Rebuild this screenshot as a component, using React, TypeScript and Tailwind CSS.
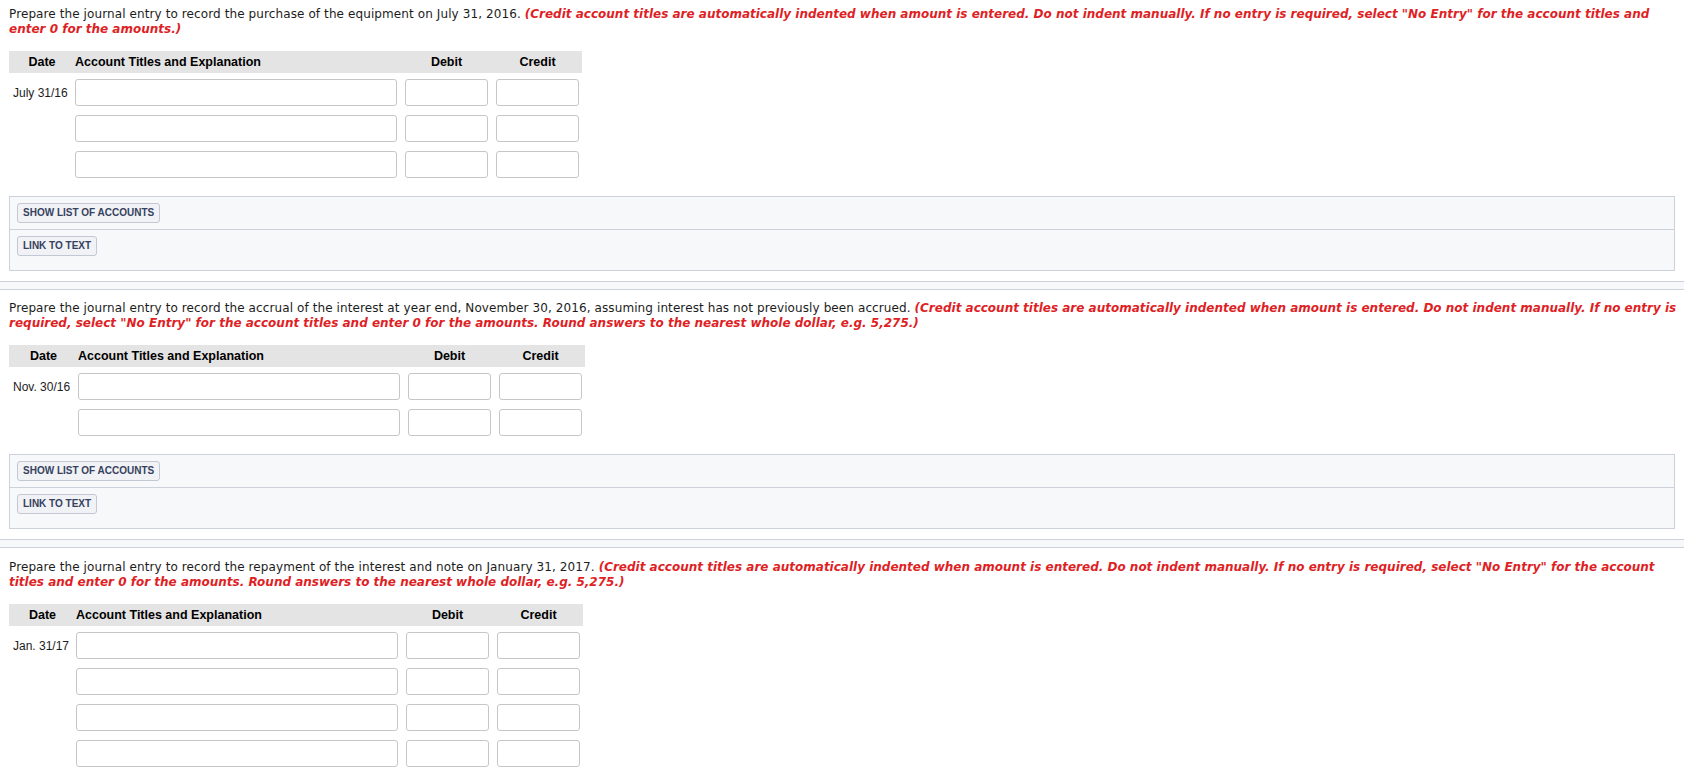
import React from 'react'

type Section = {
  lead: string
  redLine1: string
  redLine2: string
  date: string
  dateWidth: number
  rows: number
}

const sections: Section[] = [
  {
    lead: 'Prepare the journal entry to record the purchase of the equipment on July 31, 2016. ',
    redLine1:
      '(Credit account titles are automatically indented when amount is entered. Do not indent manually. If no entry is required, select "No Entry" for the account titles and',
    redLine2: 'enter 0 for the amounts.)',
    date: 'July 31/16',
    dateWidth: 66,
    rows: 3,
  },
  {
    lead: 'Prepare the journal entry to record the accrual of the interest at year end, November 30, 2016, assuming interest has not previously been accrued. ',
    redLine1:
      '(Credit account titles are automatically indented when amount is entered. Do not indent manually. If no entry is',
    redLine2:
      'required, select "No Entry" for the account titles and enter 0 for the amounts. Round answers to the nearest whole dollar, e.g. 5,275.)',
    date: 'Nov. 30/16',
    dateWidth: 69,
    rows: 2,
  },
  {
    lead: 'Prepare the journal entry to record the repayment of the interest and note on January 31, 2017. ',
    redLine1:
      '(Credit account titles are automatically indented when amount is entered. Do not indent manually. If no entry is required, select "No Entry" for the account',
    redLine2: 'titles and enter 0 for the amounts. Round answers to the nearest whole dollar, e.g. 5,275.)',
    date: 'Jan. 31/17',
    dateWidth: 67,
    rows: 4,
  },
]

function Field({ width }: { width: string }) {
  return (
    <input
      type="text"
      className={`${width} h-[27px] rounded-[3px] border border-[#c6c6c6] bg-white outline-none`}
    />
  )
}

function SmallButton({ label }: { label: string }) {
  return (
    <button className="flex h-[20px] items-center px-[5px] rounded-[3px] border border-[#c3c8d4] bg-[#f1f2f5] text-[10px] font-bold text-[#36415f] [font-family:'Liberation_Sans',Arial,sans-serif] leading-none">
      {label}
    </button>
  )
}

function JournalSection({ s, index }: { s: Section; index: number }) {
  const pad = index === 0 ? 'pt-[7px]' : index === 1 ? 'pt-[11px]' : 'pt-[12px]'
  return (
    <div className={`px-[9px] ${pad}`}>
      {/* Instructions */}
      <p className="text-[12px] leading-[15px] tracking-[0.1px] text-[#1c1c1c] [font-family:'DejaVu_Sans',Verdana,sans-serif]">
        <span className="whitespace-nowrap">
          {s.lead}
          <span className="text-[#de1f26] font-bold italic tracking-normal">{s.redLine1}</span>
        </span>
        <br />
        <span className="text-[#de1f26] font-bold italic tracking-normal">{s.redLine2}</span>
      </p>

      {/* Journal table */}
      <div className="mt-[14px] inline-flex flex-col [font-family:'Liberation_Sans',Arial,sans-serif]">
        <div className="flex h-[22px] items-center bg-[#e4e4e4] pr-[3px] text-[12.5px] font-bold text-black">
          <div className="text-center" style={{ width: s.dateWidth }}>
            Date
          </div>
          <div className="w-[322px]">Account Titles and Explanation</div>
          <div className="ml-[8px] w-[83px] text-center">Debit</div>
          <div className="ml-[8px] w-[83px] text-center">Credit</div>
        </div>
        <div className="mt-[6px] flex flex-col gap-[9px]">
          {Array.from({ length: s.rows }).map((_, i) => (
            <div key={i} className="flex items-center">
              <div className="pl-[4px] text-[12px] text-[#1c1c1c]" style={{ width: s.dateWidth }}>
                {i === 0 ? s.date : ''}
              </div>
              <Field width="w-[322px]" />
              <div className="ml-[8px] flex">
                <Field width="w-[83px]" />
              </div>
              <div className="ml-[8px] flex">
                <Field width="w-[83px]" />
              </div>
            </div>
          ))}
        </div>
      </div>

      {/* Links panel */}
      {s.rows < 4 && (
        <div className="mt-[18px] border border-[#cdd1dc] bg-[#f7f8fa]">
          <div className="flex h-[33px] items-start border-b border-[#cdd1dc] pl-[7px] pt-[6px]">
            <SmallButton label="SHOW LIST OF ACCOUNTS" />
          </div>
          <div className="flex h-[40px] items-start pl-[7px] pt-[6px]">
            <SmallButton label="LINK TO TEXT" />
          </div>
        </div>
      )}
    </div>
  )
}

export default function App() {
  return (
    <div className="w-[1684px] min-h-[780px] overflow-hidden bg-white">
      {sections.map((s, i) => (
        <React.Fragment key={i}>
          <JournalSection s={s} index={i} />
          {i < sections.length - 1 && (
            <div className="mt-[10px] h-[9px] border-y border-[#cdd1dc] bg-[#f7f8fa]" />
          )}
        </React.Fragment>
      ))}
    </div>
  )
}
